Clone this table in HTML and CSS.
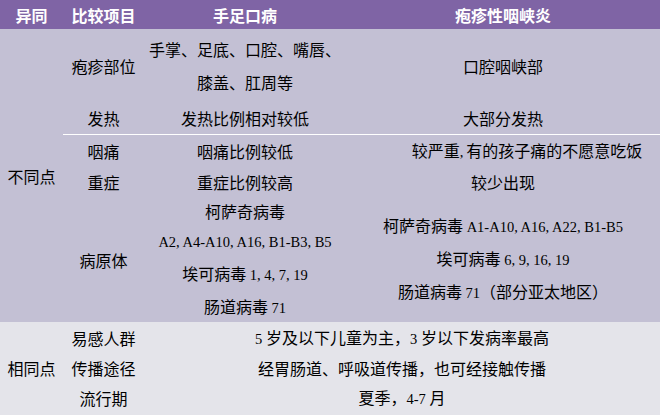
FILE: index.html
```html
<!DOCTYPE html>
<html lang="zh-CN">
<head>
<meta charset="utf-8">
<title>手足口病与疱疹性咽峡炎比较</title>
<link rel="stylesheet" href="styles.css">
</head>
<body>
<div class="table">
  <div class="head">
    <div class="cell">异同</div>
    <div class="cell">比较项目</div>
    <div class="cell">手足口病</div>
    <div class="cell">疱疹性咽峡炎</div>
  </div>
  <div class="diff">
    <div class="cell group">不同点</div>
    <div class="cell r1">疱疹部位</div>
    <div class="cell r1 lh33"><span>手掌、足底、口腔、嘴唇、</span><span>膝盖、肛周等</span></div>
    <div class="cell r1">口腔咽峡部</div>

    <div class="cell r2 line">发热</div>
    <div class="cell r2 line">发热比例相对较低</div>
    <div class="cell r2 line">大部分发热</div>

    <div class="cell r3">咽痛</div>
    <div class="cell r3">咽痛比例较低</div>
    <div class="cell r3 shift"><span>较严重<span class="lat comma">,</span>有的孩子痛的不愿意吃饭</span></div>

    <div class="cell r4">重症</div>
    <div class="cell r4">重症比例较高</div>
    <div class="cell r4">较少出现</div>

    <div class="cell r5">病原体</div>
    <div class="cell r5 lh31">
      <span>柯萨奇病毒</span>
      <span class="lat">A2, A4-A10, A16, B1-B3, B5</span>
      <span>埃可病毒 <span class="lat">1, 4, 7, 19</span></span>
      <span>肠道病毒 <span class="lat">71</span></span>
    </div>
    <div class="cell r5 lh31">
      <span>柯萨奇病毒 <span class="lat">A1-A10, A16, A22, B1-B5</span></span>
      <span>埃可病毒 <span class="lat">6, 9, 16, 19</span></span>
      <span>肠道病毒 <span class="lat">71</span>（部分亚太地区）</span>
    </div>
  </div>
  <div class="same">
    <div class="cell group">相同点</div>
    <div class="cell">易感人群</div>
    <div class="cell"><span><span class="lat">5 </span>岁及以下儿童为主，<span class="lat">3 </span>岁以下发病率最高</span></div>
    <div class="cell">传播途径</div>
    <div class="cell">经胃肠道、呼吸道传播，也可经接触传播</div>
    <div class="cell">流行期</div>
    <div class="cell"><span>夏季，<span class="lat">4-7 </span>月</span></div>
  </div>
</div>
</body>
</html>
```

FILE: styles.css
```css
html, body {
  margin: 0;
  padding: 0;
}

body {
  width: 660px;
  height: 415px;
  overflow: hidden;
  font-family: "Noto Sans CJK SC", "Noto Sans", sans-serif;
  font-size: 16px;
  color: #000;
}

.table {
  display: flex;
  flex-direction: column;
  width: 660px;
}

.cell {
  display: flex;
  flex-direction: column;
  align-items: center;
  justify-content: center;
  white-space: nowrap;
  line-height: 20px;
}

.lat {
  font-family: "Liberation Serif", "Times New Roman", serif;
  font-size: 14.5px;
}

.comma {
  padding-right: 3px;
}

.head {
  display: grid;
  grid-template-columns: 63px 81px 202px 1fr;
  height: 29px;
  background: #7f64a5;
  color: #fff;
  font-weight: bold;
}

.diff {
  display: grid;
  grid-template-columns: 63px 81px 202px 1fr;
  grid-template-rows: 73px 33px 32px 30px 125px;
  background: #c3c0d4;
}

.diff .group {
  grid-row: 1 / 6;
  grid-column: 1;
}

.line {
  border-bottom: 1px solid #fff;
  box-sizing: border-box;
}

.lh33 { line-height: 33px; }
.lh31 { line-height: 31px; }

.shift {
  padding-left: 48px;
}

.same {
  display: grid;
  grid-template-columns: 63px 81px 1fr;
  grid-template-rows: 31px 30px 30px;
  padding-bottom: 2px;
  background: #e4e4ea;
}

.same .group {
  grid-row: 1 / 4;
  grid-column: 1;
}
```
